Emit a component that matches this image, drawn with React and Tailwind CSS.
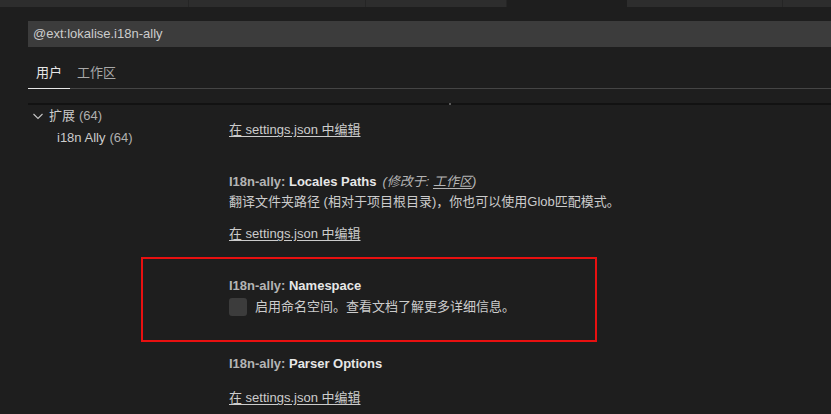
import React from "react";

const F = { fontFamily: '"Liberation Sans", "Noto Sans CJK SC", sans-serif' };

function Link({ children }) {
  return (
    <div className="h-[20px] leading-[20px] text-[13px] text-[#cccccc]">
      <span className="underline underline-offset-2 decoration-[#cccccc]">{children}</span>
    </div>
  );
}

function Title({ name, extra }) {
  return (
    <div className="h-[20px] leading-[20px] text-[13px] font-bold whitespace-nowrap">
      <span className="text-[#b4b4b4]">I18n-ally: </span>
      <span className="text-[#e7e7e7]">{name}</span>
      {extra}
    </div>
  );
}

export default function App() {
  return (
    <div className="relative w-[831px] h-[414px] overflow-hidden bg-[#1e1e1e]" style={F}>
      {/* top tab strip */}
      <div className="flex h-[7px] bg-[#2d2d2d]">
        <div className="w-[189px] border-r border-[#252525]" />
        <div className="w-[177px] border-r border-[#252525]" />
        <div className="w-[141px] border-r border-[#252525]" />
        <div className="w-[120px] bg-[#1e1e1e]" />
        <div className="w-[156px] border-r border-[#252525]" />
        <div className="flex-1" />
      </div>

      {/* search */}
      <div className="ml-[28px] mt-[14px] h-[26px] bg-[#3c3c3c] flex items-center pl-[5px] text-[13px] text-[#cccccc]">
        @ext:lokalise.i18n-ally
      </div>

      {/* tabs */}
      <div className="ml-[28px] mt-[16px] flex text-[13px] leading-[20px]">
        <div className="w-[42px] pl-[8px] pb-[5px] border-b border-[#e7e7e7] text-[#e7e7e7]">用户</div>
        <div className="pl-[7px] pr-[8px] pb-[5px] border-b border-[#454545] text-[#a8a8a8]">工作区</div>
        <div className="flex-1 border-b border-[#454545]" />
      </div>

      {/* scroll shadow */}
      <div className="ml-[28px] mt-[14px] h-[2px] bg-[#121212] relative">
        <div className="absolute left-[421px] top-0 w-[2px] h-[2px] bg-[#5a5a5a]" />
      </div>

      <div className="flex">
        {/* left tree */}
        <div className="w-[229px] shrink-0 text-[13px] text-[#cccccc]">
          <div className="h-[22px] flex items-center pl-[32px]">
            <svg width="12" height="12" viewBox="0 0 12 12" className="mr-[5px]">
              <path d="M1.5 4 L6 8.5 L10.5 4" fill="none" stroke="#c5c5c5" strokeWidth="1.1" />
            </svg>
            <span>扩展</span>
            <span className="ml-[4px] text-[#b0b0b0]">(64)</span>
          </div>
          <div className="h-[22px] flex items-center pl-[57px]">
            <span>i18n Ally</span>
            <span className="ml-[4px] text-[#b0b0b0]">(64)</span>
          </div>
        </div>

        {/* settings */}
        <div className="flex-1 pt-[15px]">
          <Link>在 settings.json 中编辑</Link>

          <div className="mt-[32px]">
            <Title
              name="Locales Paths"
              extra={
                <span className="ml-[6px] italic font-normal text-[#b4b4b4]">
                  (修改于: <span className="underline underline-offset-2">工作区</span>)
                </span>
              }
            />
            <div className="h-[20px] leading-[20px] text-[13px] text-[#cccccc] whitespace-nowrap">
              翻译文件夹路径 (相对于项目根目录)，你也可以使用Glob匹配模式。
            </div>
            <div className="mt-[12px]">
              <Link>在 settings.json 中编辑</Link>
            </div>
          </div>

          <div className="mt-[32px]">
            <Title name="Namespace" />
            <div className="mt-[1px] h-[20px] flex items-center">
              <div className="w-[18px] h-[18px] rounded-[3px] bg-[#3c3c3c]" />
              <span className="ml-[8px] text-[13px] text-[#cccccc] whitespace-nowrap">
                启用命名空间。查看文档了解更多详细信息。
              </span>
            </div>
          </div>

          <div className="mt-[37px]">
            <Title name="Parser Options" />
            <div className="mt-[14px]">
              <Link>在 settings.json 中编辑</Link>
            </div>
          </div>
        </div>
      </div>

      {/* red highlight box */}
      <div className="absolute left-[141px] top-[257px] w-[456px] h-[85px] border-2 border-[#e81010] pointer-events-none" />
    </div>
  );
}
